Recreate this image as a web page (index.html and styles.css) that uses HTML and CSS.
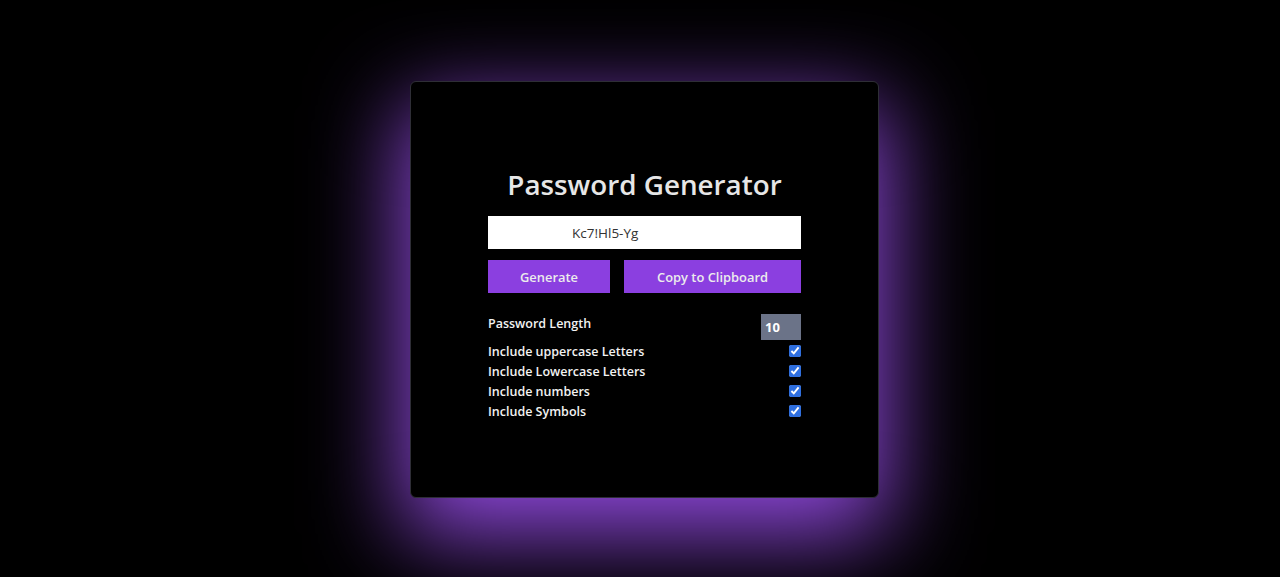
FILE: index.html
```html
<!DOCTYPE html>
<html lang="en">
<head>
<meta charset="utf-8">
<title>Password Generator</title>
<link rel="stylesheet" href="styles.css">
</head>
<body>
<div class="card">
  <h1 class="title">Password Generator</h1>
  <input class="result" type="text" value="Kc7!Hl5-Yg" readonly>
  <div class="actions">
    <button class="btn btn-generate">Generate</button>
    <button class="btn btn-copy">Copy to Clipboard</button>
  </div>
  <div class="settings">
    <div class="row row-length">
      <label>Password Length</label>
      <input class="length" type="number" value="10">
    </div>
    <div class="row">
      <label>Include uppercase Letters</label>
      <input class="check" type="checkbox" checked>
    </div>
    <div class="row">
      <label>Include Lowercase Letters</label>
      <input class="check" type="checkbox" checked>
    </div>
    <div class="row">
      <label>Include numbers</label>
      <input class="check" type="checkbox" checked>
    </div>
    <div class="row">
      <label>Include Symbols</label>
      <input class="check" type="checkbox" checked>
    </div>
  </div>
</div>
</body>
</html>
```

FILE: styles.css
```css
* { box-sizing: border-box; }
html, body { margin: 0; background: #000; }
body {
  height: 577px;
  overflow: hidden;
  font-family: "Open Sans", "Noto Sans", sans-serif;
  display: flex;
  justify-content: center;
  align-items: flex-start;
  padding-top: 81px;
  padding-left: 9px;
}
.card {
  width: 469px;
  height: 417px;
  background: #000;
  border: 1px solid #2e2e36;
  border-radius: 6px;
  box-shadow: 0 30px 90px 8px rgba(142, 72, 218, 1);
  padding: 82px 77px 0 77px;
  display: flex;
  flex-direction: column;
}
.title {
  margin: 0 0 12px 0;
  height: 40px;
  line-height: 40px;
  font-size: 27.8px;
  font-weight: 600;
  color: #e6e6e6;
  text-align: center;
}
.result {
  width: 313px;
  height: 33px;
  border: none;
  outline: none;
  background: #fff;
  color: #333;
  font-family: "Open Sans", "Noto Sans", sans-serif;
  font-size: 13.5px;
  padding: 0 0 0 84px;
  margin: 0;
}
.actions {
  display: flex;
  justify-content: space-between;
  margin-top: 11px;
}
.btn {
  height: 33px;
  border: none;
  background: #8b3fe0;
  color: #ececec;
  font-family: "Open Sans", "Noto Sans", sans-serif;
  font-size: 12.9px;
  font-weight: 600;
  padding: 0;
}
.btn-generate { width: 122px; }
.btn-copy { width: 177px; }
.settings {
  margin-top: 21px;
  display: flex;
  flex-direction: column;
}
.row {
  display: flex;
  justify-content: space-between;
  align-items: center;
  height: 20px;
  color: #f2f2f2;
  font-size: 12.5px;
  font-weight: 600;
}
.row-length {
  height: 26px;
  align-items: flex-start;
  margin-bottom: 1px;
}
.row-length label { line-height: 20px; }
.length {
  width: 40px;
  height: 26px;
  border: none;
  outline: none;
  background: #6b7388;
  color: #fff;
  font-family: "Open Sans", "Noto Sans", sans-serif;
  font-size: 13px;
  font-weight: 700;
  padding: 0 0 0 4px;
  margin: 0;
  -moz-appearance: textfield;
}
.length::-webkit-inner-spin-button,
.length::-webkit-outer-spin-button { -webkit-appearance: none; margin: 0; }
.check {
  width: 12px;
  height: 12px;
  margin: 0;
  accent-color: #2f6fe0;
}
```
